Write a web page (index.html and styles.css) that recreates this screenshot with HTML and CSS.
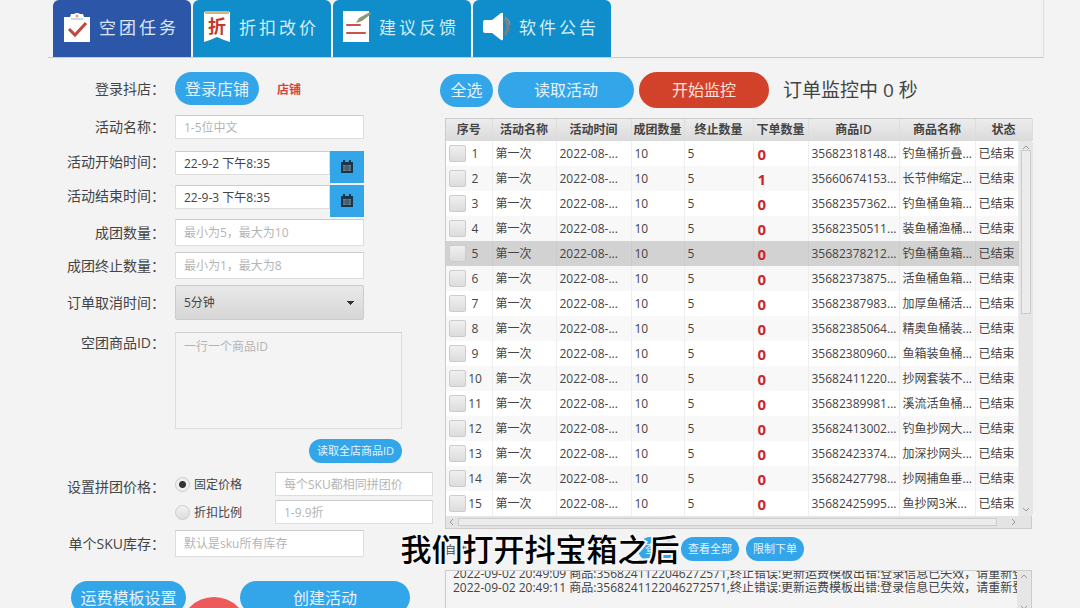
FILE: index.html
```
<!DOCTYPE html>
<html lang="zh-CN">
<head>
    <meta charset="UTF-8">
    <meta name="viewport" content="width=device-width, initial-scale=1.0">
    <title>空团任务</title>
    <link rel="stylesheet" href="styles.css">
</head>
<body>
    <!-- Tabs -->
    <nav class="tabs">
        <button type="button" class="tab active">
            <svg width="28" height="32" viewBox="0 0 28 32">
                <path d="M1 6h6l1-3h3a4 3 0 0 1 6 0h3l1 3h6v25H1z" fill="#fff"/>
                <path d="M8 8h12" stroke="#9db0da" stroke-width="1"/>
                <circle cx="14" cy="5" r="1.5" fill="#e0a080"/>
                <path d="M6 18l6 6 11-12" fill="none" stroke="#c0483b" stroke-width="3"/>
            </svg>
            <span>空团任务</span>
        </button>
        <button type="button" class="tab">
            <svg width="28" height="32" viewBox="0 0 28 32">
                <path d="M1 1h26v30l-6-2-7-3-7 3-6 2z" fill="#fff"/>
                <path d="M2 0h24v3H2z" fill="#d9b57c"/>
                <text x="14" y="22" text-anchor="middle" class="badge-text">折</text>
            </svg>
            <span>折扣改价</span>
        </button>
        <button type="button" class="tab">
            <svg width="28" height="32" viewBox="0 0 28 32">
                <path d="M0 0h26v31H0z" fill="#fff"/>
                <path d="M4 14h13M4 22h18" stroke="#c9534a" stroke-width="2" stroke-linecap="round"/>
                <path d="M13 12l3-5 11-6 1 2-9 7z" fill="#8a9a72"/>
            </svg>
            <span>建议反馈</span>
        </button>
        <button type="button" class="tab">
            <svg width="28" height="32" viewBox="0 0 28 32">
                <path d="M22 8q6 8 0 16" fill="none" stroke="#76808a" stroke-width="3"/>
                <path d="M22 6q5 3 5 8" fill="none" stroke="#b59a6a" stroke-width="1"/>
                <path d="M0 11q0-2 2-2h7l9-7q2-1 2 1v25q0 2-2 1l-9-7H2q-2 0-2-2z" fill="#fff"/>
            </svg>
            <span>软件公告</span>
        </button>
    </nav>

    <main class="main">
        <!-- Task form -->
        <form class="task-form">
            <div class="form-row login-row">
                <span class="row-label">登录抖店：</span>
                <button type="button" class="btn btn-login">登录店铺</button>
                <span class="shop-name">店铺</span>
            </div>
            <div class="form-row">
                <label class="row-label" for="name">活动名称：</label>
                <input type="text" class="field short" id="name" placeholder="1-5位中文">
            </div>
            <div class="form-row date-row">
                <label class="row-label" for="start">活动开始时间：</label>
                <input type="text" class="field date" id="start" value="22-9-2 下午8:35">
                <button type="button" class="date-btn" aria-label="选择开始时间">
                    <svg width="14" height="14" viewBox="0 0 14 14"><path d="M1 2h2V0h2v2h4V0h2v2h2v11H1z" fill="#17364a"/><path d="M3 5h8v6H3z" fill="#6c8088"/><path d="M3 7h8M3 9h8M6 5v6M8 5v6" stroke="#17364a" stroke-width=".5"/></svg>
                </button>
            </div>
            <div class="form-row date-row">
                <label class="row-label" for="end">活动结束时间：</label>
                <input type="text" class="field date" id="end" value="22-9-3 下午8:35">
                <button type="button" class="date-btn" aria-label="选择结束时间">
                    <svg width="14" height="14" viewBox="0 0 14 14"><path d="M1 2h2V0h2v2h4V0h2v2h2v11H1z" fill="#17364a"/><path d="M3 5h8v6H3z" fill="#6c8088"/><path d="M3 7h8M3 9h8M6 5v6M8 5v6" stroke="#17364a" stroke-width=".5"/></svg>
                </button>
            </div>
            <div class="form-row count-row">
                <label class="row-label" for="count">成团数量：</label>
                <input type="text" class="field" id="count" placeholder="最小为5，最大为10">
            </div>
            <div class="form-row count-row">
                <label class="row-label" for="stop">成团终止数量：</label>
                <input type="text" class="field" id="stop" placeholder="最小为1，最大为8">
            </div>
            <div class="form-row cancel-row">
                <label class="row-label" for="cancel">订单取消时间：</label>
                <select class="select" id="cancel">
                    <option>5分钟</option>
                </select>
            </div>
            <div class="form-row ids-row">
                <label class="row-label" for="ids">空团商品ID：</label>
                <div class="ids">
                    <textarea class="field area" id="ids" placeholder="一行一个商品ID"></textarea>
                    <button type="button" class="btn btn-small">读取全店商品ID</button>
                </div>
            </div>
            <div class="form-row price-row">
                <span class="row-label">设置拼团价格：</span>
                <div class="price">
                    <label class="radio"><input type="radio" name="price" checked>固定价格</label>
                    <input type="text" class="field" aria-label="固定价格" placeholder="每个SKU都相同拼团价">
                    <label class="radio"><input type="radio" name="price">折扣比例</label>
                    <input type="text" class="field" aria-label="折扣比例" placeholder="1-9.9折">
                </div>
            </div>
            <div class="form-row stock-row">
                <label class="row-label" for="stock">单个SKU库存：</label>
                <input type="text" class="field" id="stock" placeholder="默认是sku所有库存">
            </div>
            <div class="actions">
                <button type="button" class="btn btn-freight">运费模板设置</button>
                <button type="button" class="btn btn-create">创建活动</button>
                <span class="red-dot"></span>
            </div>
        </form>

        <!-- Order monitor -->
        <section class="monitor">
            <div class="toolbar">
                <button type="button" class="btn btn-all">全选</button>
                <button type="button" class="btn btn-big">读取活动</button>
                <button type="button" class="btn btn-big btn-red">开始监控</button>
                <span class="status">订单监控中 0 秒</span>
            </div>

            <div class="table-box">
                <table class="orders">
                    <colgroup>
                        <col class="c-no"><col class="c-name"><col class="c-time"><col class="c-count"><col class="c-stop">
                        <col class="c-order"><col class="c-id"><col class="c-goods"><col class="c-state"><col class="c-bar">
                    </colgroup>
                    <thead>
                        <tr>
                            <th>序号</th><th>活动名称</th><th>活动时间</th><th>成团数量</th><th>终止数量</th>
                            <th>下单数量</th><th>商品ID</th><th>商品名称</th><th colspan="2">状态</th>
                        </tr>
                    </thead>
                    <tbody id="rows"></tbody>
                </table>
                <div class="hbar">
                    <svg width="6" height="8" viewBox="0 0 6 8"><path d="M5 1L2 4l3 3"/></svg>
                    <div class="hthumb"></div>
                    <svg width="6" height="8" viewBox="0 0 6 8"><path d="M1 1l3 3-3 3"/></svg>
                </div>
            </div>

            <div class="filter">
                <span class="filter-label">自动:</span>
                <button type="button" class="btn btn-small">查看</button>
                <button type="button" class="btn btn-small">查看全部</button>
                <button type="button" class="btn btn-small">限制下单</button>
            </div>

            <div class="log-box">
                <div class="log" id="log">
                    <p>2022-09-02 20:49:09 商品:3568241122046272571,终止错误:更新运费模板出错:登录信息已失效，请重新登</p>
                    <p>2022-09-02 20:49:11 商品:3568241122046272571,终止错误:更新运费模板出错:登录信息已失效，请重新登</p>
                </div>
                <div class="vbar">
                    <svg width="8" height="6" viewBox="0 0 8 6"><path d="M1 5l3-3 3 3"/></svg>
                    <svg width="8" height="6" viewBox="0 0 8 6"><path d="M1 1l3 3 3-3"/></svg>
                </div>
            </div>
        </section>
    </main>

    <p class="caption">我们打开抖宝箱之后</p>

    <script>
        // [order count, goods id, goods name]
        const orders = [
            [0, '35682318148...', '钓鱼桶折叠...'],
            [1, '35660674153...', '长节伸缩定...'],
            [0, '35682357362...', '钓鱼桶鱼箱...'],
            [0, '35682350511...', '装鱼桶渔桶...'],
            [0, '35682378212...', '钓鱼桶鱼箱...'],
            [0, '35682373875...', '活鱼桶鱼箱...'],
            [0, '35682387983...', '加厚鱼桶活...'],
            [0, '35682385064...', '精奥鱼桶装...'],
            [0, '35682380960...', '鱼箱装鱼桶...'],
            [0, '35682411220...', '抄网套装不...'],
            [0, '35682389981...', '溪流活鱼桶...'],
            [0, '35682413002...', '钓鱼抄网大...'],
            [0, '35682423374...', '加深抄网头...'],
            [0, '35682427798...', '抄网捕鱼垂...'],
            [0, '35682425995...', '鱼抄网3米...']
        ];
        const selected = 5;

        const scrollCell = `<td class="scroll-cell" rowspan="${orders.length}">
            <div class="vbar">
                <svg width="8" height="6" viewBox="0 0 8 6"><path d="M1 5l3-3 3 3"/></svg>
                <div class="vthumb"></div>
                <svg width="8" height="6" viewBox="0 0 8 6"><path d="M1 1l3 3 3-3"/></svg>
            </div></td>`;

        document.getElementById('rows').innerHTML = orders.map(([count, id, name], i) => `
            <tr class="${i + 1 === selected ? 'selected' : ''}">
                <td class="no"><label><input type="checkbox"><span>${i + 1}</span></label></td>
                <td>第一次</td>
                <td>2022-08-...</td>
                <td>10</td>
                <td>5</td>
                <td class="ordered">${count}</td>
                <td>${id}</td>
                <td>${name}</td>
                <td>已结束</td>
                ${i === 0 ? scrollCell : ''}
            </tr>`).join('');

        document.getElementById('log').scrollTop = 6;
    </script>
</body>
</html>
```
FILE: styles.css
```
* {
    margin: 0;
    padding: 0;
    box-sizing: border-box;
}

body {
    position: relative;
    height: 100vh;
    overflow: hidden;
    background: #f3f3f3;
    color: #444;
    font-family: "Open Sans", "Noto Sans CJK SC", sans-serif;
    font-size: 12px;
}

button,
input,
select,
textarea {
    font: inherit;
    color: inherit;
    outline: none;
}

button {
    border: none;
    cursor: pointer;
}

/* Tabs */
.tabs {
    display: flex;
    gap: 2px;
    height: 58px;
    margin: 0 36px 0 48px;
    padding-left: 5px;
    border-right: 1px solid #ddd;
    border-bottom: 1px solid #ccc;
}

.tab {
    display: flex;
    align-items: center;
    gap: 8px;
    width: 138px;
    height: 57px;
    padding: 0 0 4px 10px;
    border-radius: 6px 6px 0 0;
    background: #0f8ecb;
    color: #d4edf7;
    font-size: 17px;
    letter-spacing: 3px;
    white-space: nowrap;
}

.tab.active {
    background: #2c56a8;
    color: #dde6f6;
}

.badge-text {
    fill: #c0392b;
    font-size: 18px;
    font-weight: 700;
    letter-spacing: 0;
}

/* Page */
.main {
    display: grid;
    grid-template-columns: minmax(0, 388fr) minmax(0, 592fr);
    padding: 14px 48px 0 52px;
}

/* Form */
.form-row {
    display: flex;
    align-items: center;
    margin-bottom: 12px;
}

.row-label {
    width: 113px;
    margin-right: 10px;
    flex: none;
    font-size: 14px;
    line-height: 22px;
    text-align: right;
    white-space: nowrap;
}

.field {
    width: 189px;
    height: 27px;
    padding: 0 8px;
    border: 1px solid #ddd;
    border-top-color: #ccc;
    background: #fff;
}

.field::placeholder {
    color: #b4b4b4;
}

.btn {
    height: 33px;
    border-radius: 20px;
    background: #33a5e9;
    color: #e4f4ff;
    font-size: 16px;
    line-height: 20px;
    white-space: nowrap;
}

.btn-login {
    width: 84px;
}

.btn-small {
    height: 24px;
    padding: 0 8px;
    font-size: 11px;
}

.login-row {
    margin-bottom: 10px;
}

.shop-name {
    margin-left: 18px;
    color: #d9443f;
    font-weight: 600;
}

.short {
    height: 24px;
}

.date-row {
    align-items: flex-start;
    margin-bottom: 2px;
}

.date {
    width: 155px;
    height: 24px;
}

.date-btn {
    display: flex;
    align-items: center;
    justify-content: center;
    width: 34px;
    height: 32px;
    background: #33a5e9;
}

.count-row {
    margin-bottom: 6px;
}

.select {
    width: 189px;
    height: 35px;
    padding: 0 8px;
    appearance: none;
    border: 1px solid #ccc;
    border-radius: 2px;
    background:
        linear-gradient(to bottom right, #333 50%, transparent 50%) right 8px center / 4px 4px no-repeat,
        linear-gradient(to bottom left, #333 50%, transparent 50%) right 12px center / 4px 4px no-repeat,
        linear-gradient(#e9e9e9, #d6d6d6);
}

.ids-row {
    align-items: flex-start;
    margin-bottom: 9px;
}

.ids {
    display: flex;
    flex-direction: column;
    align-items: flex-end;
    gap: 10px;
}

.area {
    display: block;
    width: 227px;
    height: 97px;
    padding: 4px 8px;
    resize: none;
    background: #f4f4f4;
}

.price-row {
    align-items: flex-start;
    margin-bottom: 6px;
}

.price-row .row-label {
    margin-top: 4px;
}

.price {
    display: grid;
    grid-template-columns: 100px 158px;
    gap: 4px 0;
}

.price .field {
    width: 158px;
    height: 24px;
}

.radio {
    display: flex;
    align-items: center;
    gap: 4px;
}

.radio input {
    width: 15px;
    height: 15px;
    appearance: none;
    border: 1px solid #ccc;
    border-radius: 50%;
    background: linear-gradient(#f2f2f2, #dcdcdc);
}

.radio input:checked {
    background: radial-gradient(circle, #333 0 3px, #eee 4px);
}

.stock-row {
    margin-bottom: 24px;
}

.actions {
    position: relative;
    display: flex;
    gap: 54px;
    padding-left: 19px;
}

.btn-freight {
    width: 115px;
}

.btn-create {
    width: 170px;
}

.red-dot {
    position: absolute;
    left: 128px;
    top: 16px;
    width: 68px;
    height: 68px;
    border-radius: 50%;
    background: #ec5a5c;
}

/* Monitor */
.toolbar {
    display: flex;
    align-items: center;
    gap: 5px;
    margin-bottom: 10px;
}

.btn-all {
    width: 53px;
}

.btn-big {
    width: 136px;
    height: 36px;
}

.btn-red {
    width: 130px;
    background: #d2422a;
    color: #fbe0d8;
}

.status {
    margin-left: 9px;
    font-size: 19px;
    line-height: 24px;
    white-space: nowrap;
}

.table-box {
    margin-left: 5px;
    border: 1px solid #ccc;
}

.orders {
    width: 100%;
    table-layout: fixed;
    border-collapse: collapse;
    background: #fff;
}

.c-no { width: 46px; }
.c-name { width: 64px; }
.c-time { width: 75px; }
.c-count { width: 53px; }
.c-stop { width: 69px; }
.c-order { width: 55px; }
.c-id { width: 91px; }
.c-goods { width: 76px; }
.c-state { width: 43px; }
.c-bar { width: 14px; }

.orders th {
    height: 22px;
    border-right: 1px solid #ddd;
    background: linear-gradient(#ececec, #dadada);
    font-weight: 600;
    line-height: 16px;
    white-space: nowrap;
}

.orders td {
    height: 25px;
    padding-left: 3px;
    border-right: 1px solid #eee;
    line-height: 16px;
    white-space: nowrap;
}

.orders tr:nth-child(even) td {
    background: #f8f8f8;
}

.orders tr.selected td {
    border-color: #ccc;
    background: #d2d2d2;
}

.no label {
    display: flex;
    align-items: center;
}

.no input {
    width: 17px;
    height: 17px;
    flex: none;
    appearance: none;
    border: 1px solid #ccc;
    border-radius: 2px;
    background: linear-gradient(#f0f0f0, #dcdcdc);
}

.no span {
    width: 18px;
    text-align: center;
}

.orders .ordered {
    padding-left: 4px;
    color: #c8282c;
    font-size: 15px;
    font-weight: 700;
}

.orders .scroll-cell {
    padding: 0;
    border: none;
    background: #e6e6e6;
}

.vbar {
    display: flex;
    flex-direction: column;
    align-items: center;
    width: 14px;
    height: 373px;
    padding: 2px 0;
    background: #e6e6e6;
}

.vbar svg:last-child {
    margin-top: auto;
}

.vthumb {
    width: 10px;
    height: 164px;
    border: 1px solid #ccc;
    background: #ececec;
}

.vbar path,
.hbar path {
    fill: none;
    stroke: #999;
}

.hbar {
    display: flex;
    align-items: center;
    gap: 4px;
    height: 12px;
    padding: 0 14px 0 2px;
    background: #e4e4e4;
}

.hthumb {
    flex: 1;
    height: 8px;
    margin-right: 10px;
    border: 1px solid #ccc;
    background: #ececec;
}

.filter {
    display: flex;
    align-items: center;
    gap: 7px;
    margin: 8px 0 9px 5px;
}

.filter .btn {
    padding: 0 7px;
}

.filter-label {
    width: 186px;
    font-size: 11px;
}

.log-box {
    display: flex;
    height: 44px;
    margin-left: 5px;
    border: 1px solid #ccc;
    background: #f4f4f4;
}

.log {
    flex: 1;
    min-width: 0;
    overflow: hidden;
    padding: 2px 0 40px 7px;
    line-height: 14px;
    white-space: nowrap;
}

.log-box .vbar {
    height: 42px;
}

/* Caption over the window */
.caption {
    position: absolute;
    top: 525px;
    left: 0;
    width: 100%;
    color: #000;
    font-family: "Noto Sans CJK SC", sans-serif;
    font-size: 31px;
    font-weight: 500;
    line-height: 46px;
    text-align: center;
    -webkit-text-stroke: 4px #f6f6f6;
    paint-order: stroke fill;
}
```
